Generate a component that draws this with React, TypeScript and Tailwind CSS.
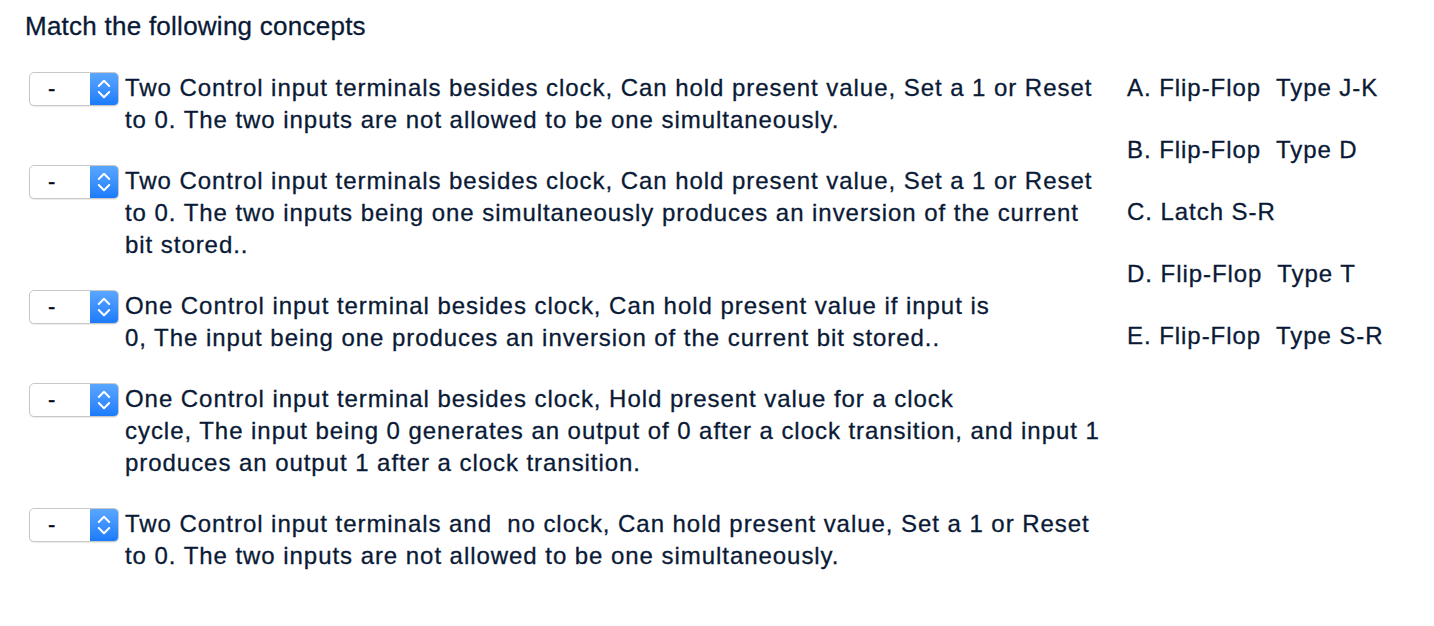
const questions: string[][] = [
  [
    "Two Control input terminals besides clock, Can hold present value, Set a 1 or Reset",
    "to 0. The two inputs are not allowed to be one simultaneously.",
  ],
  [
    "Two Control input terminals besides clock, Can hold present value, Set a 1 or Reset",
    "to 0. The two inputs being one simultaneously produces an inversion of the current",
    "bit stored..",
  ],
  [
    "One Control input terminal besides clock, Can hold present value if input is",
    "0, The input being one produces an inversion of the current bit stored..",
  ],
  [
    "One Control input terminal besides clock, Hold present value for a clock",
    "cycle, The input being 0 generates an output of 0 after a clock transition, and input 1",
    "produces an output 1 after a clock transition.",
  ],
  [
    "Two Control input terminals and  no clock, Can hold present value, Set a 1 or Reset",
    "to 0. The two inputs are not allowed to be one simultaneously.",
  ],
];

const answers = [
  "A. Flip-Flop  Type J-K",
  "B. Flip-Flop  Type D",
  "C. Latch S-R",
  "D. Flip-Flop  Type T",
  "E. Flip-Flop  Type S-R",
];

function Select() {
  return (
    <div className="flex h-[34px] w-[90px] shrink-0 overflow-hidden rounded-[5px] border border-[#c8c8c8] bg-white shadow-[0_1px_1px_rgba(0,0,0,0.08)]">
      <div className="flex flex-1 items-center pl-[18px] text-[22px] leading-none text-black">
        -
      </div>
      <div className="flex w-[28px] items-center justify-center bg-gradient-to-b from-[#5aa6ff] to-[#1a7bfb]">
        <svg width="14" height="22" viewBox="0 0 14 22" fill="none">
          <path
            d="M1.8 8 L7 2.8 L12.2 8 M1.8 14 L7 19.2 L12.2 14"
            stroke="white"
            strokeWidth="2"
            strokeLinecap="round"
            strokeLinejoin="round"
          />
        </svg>
      </div>
    </div>
  );
}

export default function App() {
  return (
    <div className="min-h-[626px] w-[1434px] bg-white pl-[25px] pt-[10px] font-['Liberation_Sans',Arial,sans-serif] text-[#0a1a36] [-webkit-text-stroke:0.3px_#0a1a36]">
      <h1 className="text-[26px] leading-[32px] tracking-[0.25px]">
        Match the following concepts
      </h1>
      <div className="mt-[30px] flex">
        <div className="flex w-[1102px] flex-col gap-[29px] pl-[4px]">
          {questions.map((lines, i) => (
            <div key={i} className="flex gap-[6px]">
              <Select />
              <div className="text-[24px] leading-[32px] tracking-[0.95px]">
                {lines.map((line, j) => (
                  <div key={j} className="whitespace-pre">
                    {line}
                  </div>
                ))}
              </div>
            </div>
          ))}
        </div>
        <div className="flex flex-col gap-[30px] text-[24px] leading-[32px] tracking-[0.95px]">
          {answers.map((a) => (
            <div key={a} className="whitespace-pre">
              {a}
            </div>
          ))}
        </div>
      </div>
    </div>
  );
}
